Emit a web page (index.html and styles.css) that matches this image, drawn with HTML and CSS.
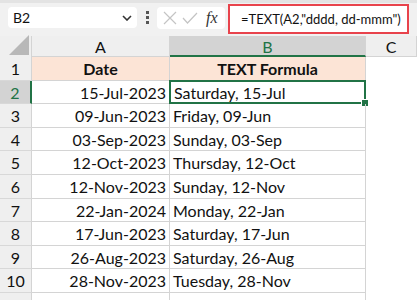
FILE: index.html
```html
<!DOCTYPE html>
<html lang="en">
<head>
    <meta charset="UTF-8">
    <meta name="viewport" content="width=device-width, initial-scale=1.0">
    <title>TEXT Formula</title>
    <link rel="stylesheet" href="styles.css">
</head>
<body>

<div class="formula-bar">
    <div class="name-box">
        <span>B2</span>
        <svg class="chevron" width="10" height="6" viewBox="0 0 10 6"><path d="M1 1l4 4 4-4" fill="none" stroke="#333" stroke-width="1.6"/></svg>
    </div>
    <div class="dots"><i></i><i></i><i></i></div>
    <div class="fx-buttons">
        <svg width="14" height="14" viewBox="0 0 14 14"><path d="M1 1l12 12M13 1L1 13" stroke="#c4c4c4" stroke-width="1.2"/></svg>
        <svg width="16" height="12" viewBox="0 0 16 12"><path d="M1 6l4.5 5L15 1" fill="none" stroke="#c4c4c4" stroke-width="1.2"/></svg>
        <span class="fx">fx</span>
    </div>
    <div class="formula-input">=TEXT(A2,"dddd, dd-mmm")</div>
</div>

<div class="sheet">
    <div class="corner"><svg width="20" height="20" viewBox="0 0 20 20"><path d="M20 0V20H0Z" fill="#b8b8b8"/></svg></div>
    <div class="col-head">A</div>
    <div class="col-head selected">B</div>
    <div class="col-head">C</div>

    <div class="row-head">1</div>
    <div class="cell head">Date</div>
    <div class="cell head">TEXT Formula</div>
    <div class="blank"></div>

    <div class="row-head selected">2</div>
    <div class="cell date">15-Jul-2023</div>
    <div class="cell text active">Saturday, 15-Jul<span class="handle"></span></div>
    <div class="blank"></div>

    <div class="row-head">3</div>
    <div class="cell date">09-Jun-2023</div>
    <div class="cell text">Friday, 09-Jun</div>
    <div class="blank"></div>

    <div class="row-head">4</div>
    <div class="cell date">03-Sep-2023</div>
    <div class="cell text">Sunday, 03-Sep</div>
    <div class="blank"></div>

    <div class="row-head">5</div>
    <div class="cell date">12-Oct-2023</div>
    <div class="cell text">Thursday, 12-Oct</div>
    <div class="blank"></div>

    <div class="row-head">6</div>
    <div class="cell date">12-Nov-2023</div>
    <div class="cell text">Sunday, 12-Nov</div>
    <div class="blank"></div>

    <div class="row-head">7</div>
    <div class="cell date">22-Jan-2024</div>
    <div class="cell text">Monday, 22-Jan</div>
    <div class="blank"></div>

    <div class="row-head">8</div>
    <div class="cell date">17-Jun-2023</div>
    <div class="cell text">Saturday, 17-Jun</div>
    <div class="blank"></div>

    <div class="row-head">9</div>
    <div class="cell date">26-Aug-2023</div>
    <div class="cell text">Saturday, 26-Aug</div>
    <div class="blank"></div>

    <div class="row-head">10</div>
    <div class="cell date">28-Nov-2023</div>
    <div class="cell text">Tuesday, 28-Nov</div>
    <div class="blank"></div>

    <div class="row-head last"></div>
    <div class="cell"></div>
    <div class="cell"></div>
    <div class="blank"></div>
</div>

</body>
</html>
```

FILE: styles.css
```css
body {
    margin: 0;
    font-family: Lato, "Open Sans", sans-serif;
    color: #111;
    background-color: white;
    overflow: hidden;
}
.formula-bar {
    height: 36px;
    box-sizing: border-box;
    border-top: 3px solid #e3e3e3;
    background-color: #f1f1f1;
    display: flex;
    align-items: center;
    padding-left: 8px;
}
.name-box {
    flex: 0 0 129px;
    height: 21px;
    box-sizing: border-box;
    background-color: white;
    border-radius: 4px;
    display: flex;
    align-items: center;
    justify-content: space-between;
    padding: 0 5px 0 5px;
    font-size: 14px;
    margin-top: -4px;
}
.dots {
    flex: 0 0 20px;
    display: flex;
    flex-direction: column;
    align-items: center;
    gap: 2px;
    margin-top: -4px;
}
.dots i {
    width: 3px;
    height: 3px;
    background-color: #555;
}
.fx-buttons {
    flex: 0 0 68px;
    height: 22px;
    background-color: white;
    border-radius: 4px;
    display: flex;
    align-items: center;
    gap: 5px;
    padding-left: 6px;
    box-sizing: border-box;
    margin-top: -4px;
}
.fx {
    font-family: "Liberation Serif", serif;
    font-style: italic;
    font-size: 16px;
    color: #333;
    margin-left: 3px;
}
.formula-input {
    margin-left: 3px;
    flex: 0 0 181px;
    min-width: 0;
    height: 30px;
    box-sizing: border-box;
    border: 2px solid #e8434c;
    background-color: white;
    font-size: 13px;
    padding-left: 11px;
    line-height: 26px;
    white-space: nowrap;
    overflow: hidden;
    margin-top: -2px;
}
.sheet {
    display: grid;
    grid-template-columns: 32px 138px 196px 1fr;
    grid-template-rows: 21px repeat(11, 23.6px);
}
.corner {
    background-color: #efefef;
    border-right: 1px solid #d4d4d4;
    display: flex;
    justify-content: flex-end;
    align-items: flex-end;
    padding: 0 2px 2px 0;
}
.col-head {
    background-color: #efefef;
    border-right: 1px solid #d4d4d4;
    border-bottom: 1px solid #d4d4d4;
    text-align: center;
    font-size: 16px;
    line-height: 21px;
}
.col-head.selected {
    background-color: #d3d3d3;
    border-bottom: 2px solid #217346;
    color: #217346;
}
.row-head {
    background-color: #efefef;
    border-right: 1px solid #d4d4d4;
    border-bottom: 1px solid #d8d8d8;
    text-align: center;
    font-size: 16px;
    line-height: 23px;
}
.row-head.selected {
    background-color: #d3d3d3;
    border-right: 2px solid #217346;
    color: #217346;
}
.cell {
    border-right: 1px solid #d4d4d4;
    border-bottom: 1px solid #d4d4d4;
    font-size: 16px;
    line-height: 23px;
    white-space: nowrap;
    position: relative;
}
.cell.head {
    background-color: #fce4d6;
    font-weight: bold;
    text-align: center;
}
.cell.date {
    text-align: right;
    padding-right: 3px;
}
.cell.text {
    padding-left: 3px;
}
.cell.active {
    border: 2px solid #217346;
    margin: -1px 0 0 -1px;
    line-height: 21px;
}
.handle {
    position: absolute;
    right: -5px;
    bottom: -5px;
    width: 6px;
    height: 6px;
    background-color: #217346;
    border: 1px solid white;
}
.blank {
    background-color: white;
}
```
